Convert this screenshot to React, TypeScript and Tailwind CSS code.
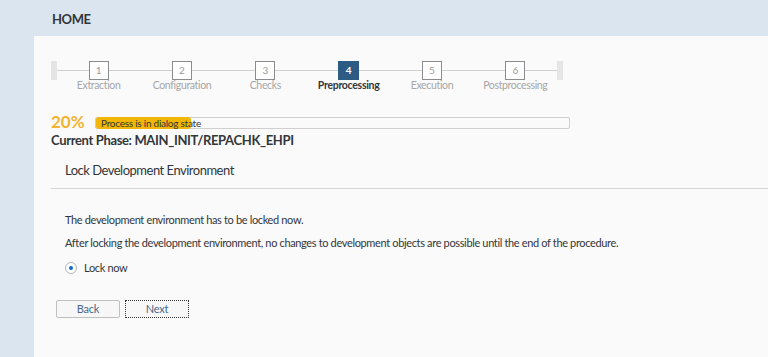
import React from "react";

const steps = [
  { n: 1, label: "Extraction" },
  { n: 2, label: "Configuration" },
  { n: 3, label: "Checks" },
  { n: 4, label: "Preprocessing", active: true },
  { n: 5, label: "Execution" },
  { n: 6, label: "Postprocessing" },
];

export default function App() {
  return (
    <div
      className="w-[768px] h-[357px] overflow-hidden bg-[#dbe5ef] flex flex-col"
      style={{ fontFamily: 'Lato, "Liberation Sans", sans-serif' }}
    >
      <div className="h-[36px] shrink-0 pl-[52px] pt-[11px]">
        <div className="text-[13px] font-bold text-[#32363a] leading-[16px] tracking-[-0.4px]">HOME</div>
      </div>
      <div className="ml-[34px] flex-1 bg-[#fafafa] pl-[17px] pt-[25px]">
        {/* steps */}
        <div className="flex items-start">
          <div className="w-[6px] h-[19px] bg-[#e5e5e5]" />
          {steps.map((s) => (
            <div key={s.n} className="relative w-[83.33px] flex flex-col items-center">
              <div className="absolute left-0 right-0 top-[9px] h-px bg-[#cfcfcf]" />
              <div
                className={
                  s.active
                    ? "relative z-10 w-[21px] h-[19px] bg-[#2d5b84] text-white text-[10px] font-bold flex items-center justify-center"
                    : "relative z-10 w-[20px] h-[19px] bg-white border border-[#8c8c8c] text-[#9a9a9a] text-[10px] flex items-center justify-center"
                }
              >
                {s.n}
              </div>
              <div
                className={
                  s.active
                    ? "text-[10.5px] leading-[11px] font-bold text-[#32363a] whitespace-nowrap tracking-[-0.3px]"
                    : "text-[10.5px] leading-[11px] text-[#a6a6a6] whitespace-nowrap tracking-[-0.35px]"
                }
              >
                {s.label}
              </div>
            </div>
          ))}
          <div className="w-[6px] h-[19px] bg-[#e5e5e5]" />
        </div>

        {/* progress */}
        <div className="mt-[24px] h-[16px] flex items-center">
          <div className="text-[17px] leading-[16px] font-bold text-[#f4b330] w-[44px] -mt-[2px]">20%</div>
          <div className="relative w-[475px] h-[12px] rounded-[2px] border border-[#cfcfcf] bg-[#fafafa]">
            <div className="absolute left-0 top-[-1px] bottom-[-1px] w-[95px] rounded-[3px] bg-[#f2b705]" />
            <div className="relative pl-[5px] text-[10px] leading-[10px] text-[#32363a] tracking-[-0.25px]">
              Process is in dialog state
            </div>
          </div>
        </div>
        <div className="text-[13px] leading-[16px] font-bold text-[#32363a] mt-[1px] tracking-[-0.35px]">
          Current Phase: MAIN_INIT/REPACHK_EHPI
        </div>

        <div className="pl-[14px] pt-[14px] pb-[10px] text-[13px] leading-[16px] text-[#32363a] border-b border-[#d6d6d6] tracking-[-0.5px]">
          Lock Development Environment
        </div>

        <div className="pl-[14px] pt-[23px] text-[11px] leading-[15px] text-[#32363a] flex flex-col gap-[8px] tracking-[-0.35px]">
          <div>The development environment has to be locked now.</div>
          <div>After locking the development environment, no changes to development objects are possible until the end of the procedure.</div>
          <div className="flex items-center gap-[7px] mt-[2px]">
            <div className="w-[12px] h-[12px] rounded-full border border-[#b5b5b5] bg-white flex items-center justify-center">
              <div className="w-[4px] h-[4px] rounded-full bg-[#0a6ed1]" />
            </div>
            <span>Lock now</span>
          </div>
        </div>

        <div className="mt-[25px] pl-[5px] flex gap-[5px]">
          <button className="w-[64px] h-[18px] border border-[#bfbfbf] rounded-[2px] bg-[#f7f7f7] text-[11px] leading-[14px] text-[#4a6a8a] tracking-[-0.2px]">
            Back
          </button>
          <button className="w-[64px] h-[18px] border border-dotted border-[#333] bg-[#f7f7f7] text-[11px] leading-[14px] text-[#4a6a8a] tracking-[-0.2px]">
            Next
          </button>
        </div>
      </div>
    </div>
  );
}
